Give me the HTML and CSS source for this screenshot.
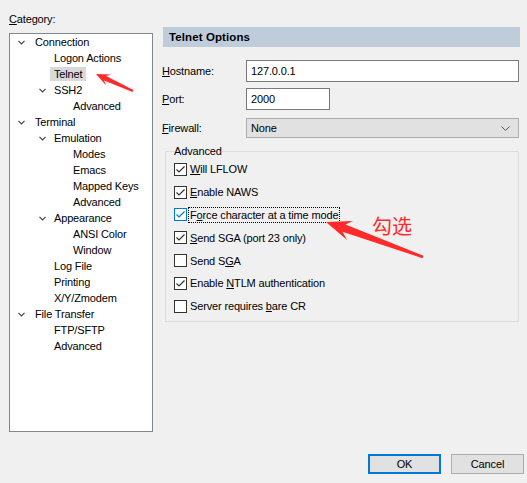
FILE: index.html
```html
<!DOCTYPE html>
<html>
<head>
<meta charset="utf-8">
<link rel="stylesheet" href="styles.css">
</head>
<body>
<div class="dialog">
  <div class="main">
    <div class="left">
      <div class="cat-label"><u>C</u>ategory:</div>
      <div class="tree">
        <div class="row lv0"><span class="exp"><svg width="7" height="5" viewBox="0 0 7 5"><path d="M0.5 0.8 L3.5 3.8 L6.5 0.8" /></svg></span><span class="txt">Connection</span></div>
        <div class="row lv1"><span class="exp"></span><span class="txt">Logon Actions</span></div>
        <div class="row lv1"><span class="exp"></span><span class="txt sel">Telnet</span></div>
        <div class="row lv1"><span class="exp"><svg width="7" height="5" viewBox="0 0 7 5"><path d="M0.5 0.8 L3.5 3.8 L6.5 0.8" /></svg></span><span class="txt">SSH2</span></div>
        <div class="row lv2"><span class="exp"></span><span class="txt">Advanced</span></div>
        <div class="row lv0"><span class="exp"><svg width="7" height="5" viewBox="0 0 7 5"><path d="M0.5 0.8 L3.5 3.8 L6.5 0.8" /></svg></span><span class="txt">Terminal</span></div>
        <div class="row lv1"><span class="exp"><svg width="7" height="5" viewBox="0 0 7 5"><path d="M0.5 0.8 L3.5 3.8 L6.5 0.8" /></svg></span><span class="txt">Emulation</span></div>
        <div class="row lv2"><span class="exp"></span><span class="txt">Modes</span></div>
        <div class="row lv2"><span class="exp"></span><span class="txt">Emacs</span></div>
        <div class="row lv2"><span class="exp"></span><span class="txt">Mapped Keys</span></div>
        <div class="row lv2"><span class="exp"></span><span class="txt">Advanced</span></div>
        <div class="row lv1"><span class="exp"><svg width="7" height="5" viewBox="0 0 7 5"><path d="M0.5 0.8 L3.5 3.8 L6.5 0.8" /></svg></span><span class="txt">Appearance</span></div>
        <div class="row lv2"><span class="exp"></span><span class="txt">ANSI Color</span></div>
        <div class="row lv2"><span class="exp"></span><span class="txt">Window</span></div>
        <div class="row lv1"><span class="exp"></span><span class="txt">Log File</span></div>
        <div class="row lv1"><span class="exp"></span><span class="txt">Printing</span></div>
        <div class="row lv1"><span class="exp"></span><span class="txt">X/Y/Zmodem</span></div>
        <div class="row lv0"><span class="exp"><svg width="7" height="5" viewBox="0 0 7 5"><path d="M0.5 0.8 L3.5 3.8 L6.5 0.8" /></svg></span><span class="txt">File Transfer</span></div>
        <div class="row lv1"><span class="exp"></span><span class="txt">FTP/SFTP</span></div>
        <div class="row lv1"><span class="exp"></span><span class="txt">Advanced</span></div>
      </div>
    </div>
    <div class="right">
      <div class="header">Telnet Options</div>
      <div class="field first">
        <span class="flabel"><u>H</u>ostname:</span>
        <div class="input wide">127.0.0.1</div>
      </div>
      <div class="field port">
        <span class="flabel"><u>P</u>ort:</span>
        <div class="input narrow">2000</div>
      </div>
      <div class="field fw">
        <span class="flabel"><u>F</u>irewall:</span>
        <div class="select"><span>None</span><svg width="9" height="5" viewBox="0 0 9 5"><path d="M0.5 0.5 L4.5 4.5 L8.5 0.5" /></svg></div>
      </div>
      <fieldset class="group">
        <legend>Advanced</legend>
        <div class="cb-row"><span class="box"><svg width="11" height="11" viewBox="0 0 11 11"><path d="M1.5 5.5 L4 8 L9.5 2.5" /></svg></span><span class="cb-label"><u>W</u>ill LFLOW</span></div>
        <div class="cb-row"><span class="box"><svg width="11" height="11" viewBox="0 0 11 11"><path d="M1.5 5.5 L4 8 L9.5 2.5" /></svg></span><span class="cb-label"><u>E</u>nable NAWS</span></div>
        <div class="cb-row"><span class="box focus"><svg width="11" height="11" viewBox="0 0 11 11"><path d="M1.5 5.5 L4 8 L9.5 2.5" /></svg></span><span class="cb-label focused">F<u>o</u>rce character at a time mode</span></div>
        <div class="cb-row"><span class="box"><svg width="11" height="11" viewBox="0 0 11 11"><path d="M1.5 5.5 L4 8 L9.5 2.5" /></svg></span><span class="cb-label"><u>S</u>end SGA (port 23 only)</span></div>
        <div class="cb-row"><span class="box"></span><span class="cb-label">Send S<u>G</u>A</span></div>
        <div class="cb-row"><span class="box"><svg width="11" height="11" viewBox="0 0 11 11"><path d="M1.5 5.5 L4 8 L9.5 2.5" /></svg></span><span class="cb-label">Enable <u>N</u>TLM authentication</span></div>
        <div class="cb-row"><span class="box"></span><span class="cb-label">Server requires <u>b</u>are CR</span></div>
      </fieldset>
    </div>
  </div>
  <div class="footer">
    <div class="btn default">OK</div>
    <div class="btn">Cancel</div>
  </div>

  <svg class="annot" width="527" height="483" viewBox="0 0 527 483">
    <polygon points="96,74 111.2,74.4 106.1,75.9 133.4,90.1 132.6,91.9 104.1,80.5 106.2,85.4" />
    <polygon points="326,222 353,221 345.5,224.6 423.4,255.8 422.6,258.2 342.5,231.8 347,240" />
  </svg>
  <span class="annot-text">勾选</span>
</div>
</body>
</html>
```
FILE: styles.css
```css
html, body {
  margin: 0;
  padding: 0;
}
body {
  width: 527px;
  height: 483px;
  background: #f0f0f0;
  font-family: "Liberation Sans", Arial, sans-serif;
  font-size: 11px;
  letter-spacing: -0.15px;
  color: #000;
  overflow: hidden;
}
u {
  text-decoration: underline;
  text-underline-offset: 1px;
}
.dialog {
  position: relative;
  width: 527px;
  height: 483px;
  display: flex;
  flex-direction: column;
}
.main {
  display: grid;
  grid-template-columns: 144px 358px;
  column-gap: 9px;
  padding-left: 9px;
  height: 432px;
}
.left {
  display: flex;
  flex-direction: column;
}
.cat-label {
  margin-top: 12px;
  line-height: 14px;
}
.tree {
  margin-top: 7px;
  box-sizing: border-box;
  height: 399px;
  border: 1px solid #828790;
  background: #fff;
}
.row {
  display: flex;
  align-items: center;
  height: 16px;
}
.row.lv0 { padding-left: 8px; }
.row.lv1 { padding-left: 27px; }
.row.lv2 { padding-left: 46px; }
.exp {
  width: 17px;
  flex: none;
  display: flex;
  align-items: center;
}
.exp svg path {
  fill: none;
  stroke: #444;
  stroke-width: 1.2;
}
.row.lv1 .exp svg { margin-left: 2px; }
.txt {
  padding: 0 4px;
  margin-left: -4px;
  line-height: 14px;
}
.txt.sel {
  background: #d9d9d9;
}
.right {
  display: flex;
  flex-direction: column;
  padding-top: 27px;
}
.header {
  margin-left: 1px;
  height: 20px;
  line-height: 20px;
  background: #bfcddb;
  padding-left: 6px;
  font-weight: bold;
  font-size: 11.5px;
  letter-spacing: 0.1px;
}
.field {
  display: flex;
  align-items: center;
}
.field.first { margin-top: 13px; }
.field.port { margin-top: 6px; }
.field.fw { margin-top: 8px; }
.flabel {
  width: 84px;
  flex: none;
}
.input {
  box-sizing: border-box;
  height: 22px;
  line-height: 20px;
  border: 1px solid #7a7a7a;
  background: #fff;
  padding-left: 4px;
}
.input.wide { width: 273px; }
.input.narrow { width: 84px; }
.select {
  box-sizing: border-box;
  width: 273px;
  height: 20px;
  border: 1px solid #adadad;
  background: #e1e1e1;
  padding: 0 8px 0 4px;
  display: flex;
  align-items: center;
  justify-content: space-between;
}
.select svg path {
  fill: none;
  stroke: #555;
  stroke-width: 1;
}
.group {
  margin: 6px 0 0 3px;
  width: 354px;
  box-sizing: border-box;
  border: 1px solid #dcdcdc;
  padding: 0 8px 3px 8px;
  min-width: 0;
}
.group legend {
  padding: 0;
  line-height: 14px;
}
.cb-row {
  display: flex;
  align-items: center;
  height: 22.8px;
}
.box {
  box-sizing: border-box;
  width: 13px;
  height: 13px;
  border: 1px solid #333;
  background: #fff;
  flex: none;
  display: flex;
}
.box svg path {
  fill: none;
  stroke: #333;
  stroke-width: 1.2;
}
.box.focus {
  border-color: #0078d7;
}
.box.focus svg path {
  stroke: #0078d7;
}
.cb-label {
  margin-left: 3px;
}
.cb-label.focused {
  outline: 1px dotted #000;
  outline-offset: 1px;
}
.footer {
  display: flex;
  justify-content: flex-end;
  gap: 10px;
  padding-right: 3px;
  margin-top: 22px;
}
.btn {
  box-sizing: border-box;
  width: 73px;
  height: 20px;
  line-height: 18px;
  text-align: center;
  border: 1px solid #adadad;
  background: #e1e1e1;
}
.btn.default {
  border: 2px solid #0078d7;
  line-height: 16px;
}
.annot {
  position: absolute;
  left: 0;
  top: 0;
  pointer-events: none;
}
.annot polygon {
  fill: #ff2a2a;
}
.annot-text {
  position: absolute;
  left: 372px;
  top: 216px;
  font-family: "Noto Sans CJK SC", sans-serif;
  font-size: 20px;
  line-height: 20px;
  color: #ff2a2a;
  letter-spacing: 0;
}
```
